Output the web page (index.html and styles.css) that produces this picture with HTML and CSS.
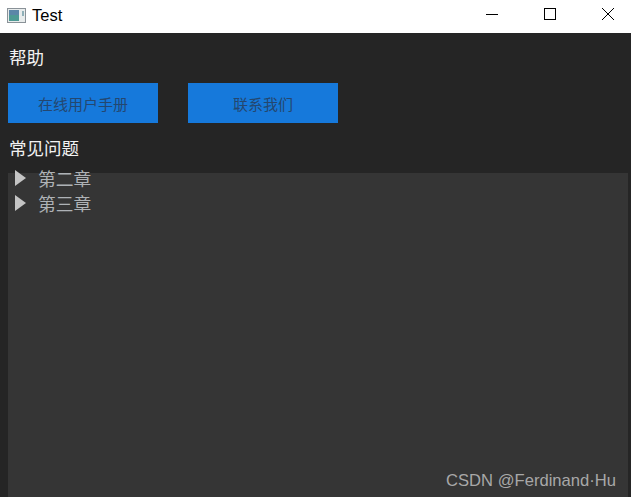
FILE: index.html
```html
<!DOCTYPE html>
<html lang="zh-CN">
<head>
  <meta charset="UTF-8">
  <title>Test</title>
  <link rel="stylesheet" href="styles.css">
</head>
<body>
  <div class="titlebar">
    <svg class="app-icon" width="19" height="15" viewBox="0 0 19 15">
      <rect x="0.5" y="0.5" width="18" height="14" fill="#e8ecec" stroke="#8a9298"/>
      <rect x="2" y="2" width="10" height="11" fill="#4f9a94"/>
      <rect x="2" y="2" width="10" height="5" fill="#5c86a8"/>
      <rect x="15" y="3" width="2" height="5" fill="#8fb0b8"/>
    </svg>
    <span class="app-title">Test</span>
    <div class="win-btns">
      <svg class="win-btn" width="14" height="14" viewBox="0 0 14 14"><path d="M1 7.5H13" stroke="#000" fill="none"/></svg>
      <svg class="win-btn" width="14" height="14" viewBox="0 0 14 14"><rect x="1.5" y="1.5" width="11" height="11" stroke="#000" fill="none"/></svg>
      <svg class="win-btn" width="14" height="14" viewBox="0 0 14 14"><path d="M1 1L13 13M13 1L1 13" stroke="#000" fill="none"/></svg>
    </div>
  </div>
  <div class="content">
    <div class="heading">帮助</div>
    <div class="btn-row">
      <button class="blue-btn">在线用户手册</button>
      <button class="blue-btn">联系我们</button>
    </div>
    <div class="heading faq">常见问题</div>
    <div class="tree">
      <div class="tree-list">
        <div class="tree-row"><span class="arrow"></span>第二章</div>
        <div class="tree-row"><span class="arrow"></span>第三章</div>
      </div>
    </div>
  </div>
  <div class="watermark">CSDN @Ferdinand·Hu</div>
</body>
</html>
```

FILE: styles.css
```css
html, body {
  margin: 0;
  padding: 0;
  height: 100%;
  overflow: hidden;
}
body {
  display: flex;
  flex-direction: column;
  background: #252525;
  font-family: "Noto Sans CJK SC", "Liberation Sans", sans-serif;
}
.titlebar {
  display: flex;
  align-items: center;
  height: 33px;
  flex: none;
  background: #fff;
  padding-left: 7px;
  padding-bottom: 2px;
  box-sizing: border-box;
}
.app-icon {
  margin-right: 6px;
}
.app-title {
  font-family: "Liberation Sans", sans-serif;
  font-size: 16.5px;
  color: #000;
}
.win-btns {
  display: flex;
  margin-left: auto;
  margin-right: 16px;
  gap: 44px;
  padding-bottom: 4px;
}
.content {
  flex: 1;
  display: flex;
  flex-direction: column;
  padding: 0 3px 0 8px;
  min-height: 0;
}
.heading {
  height: 20px;
  line-height: 20px;
  margin-top: 14px;
  padding-left: 1px;
  font-size: 17.5px;
  color: #f2f2f2;
}
.btn-row {
  display: flex;
  gap: 30px;
  margin-top: 16px;
}
.blue-btn {
  width: 150px;
  height: 40px;
  border: 0;
  padding: 0;
  background: #1679db;
  color: #24476f;
  font-family: "Noto Sans CJK SC", sans-serif;
  font-size: 15px;
}
.heading.faq {
  margin-top: 15px;
}
.tree {
  flex: 1;
  margin-top: 15px;
  background: #353535;
}
.tree-list {
  margin-top: -8px;
}
.tree-row {
  display: flex;
  align-items: center;
  height: 25px;
  font-size: 17.8px;
  color: #aeb2b6;
  padding-left: 7px;
}
.arrow {
  width: 0;
  height: 0;
  border-left: 11px solid #c4c4c4;
  border-top: 8px solid transparent;
  border-bottom: 8px solid transparent;
  margin-right: 12px;
}
.watermark {
  position: absolute;
  right: 15px;
  bottom: 6px;
  font-family: "Liberation Sans", sans-serif;
  font-size: 16.6px;
  color: #a8a8a8;
}
```
